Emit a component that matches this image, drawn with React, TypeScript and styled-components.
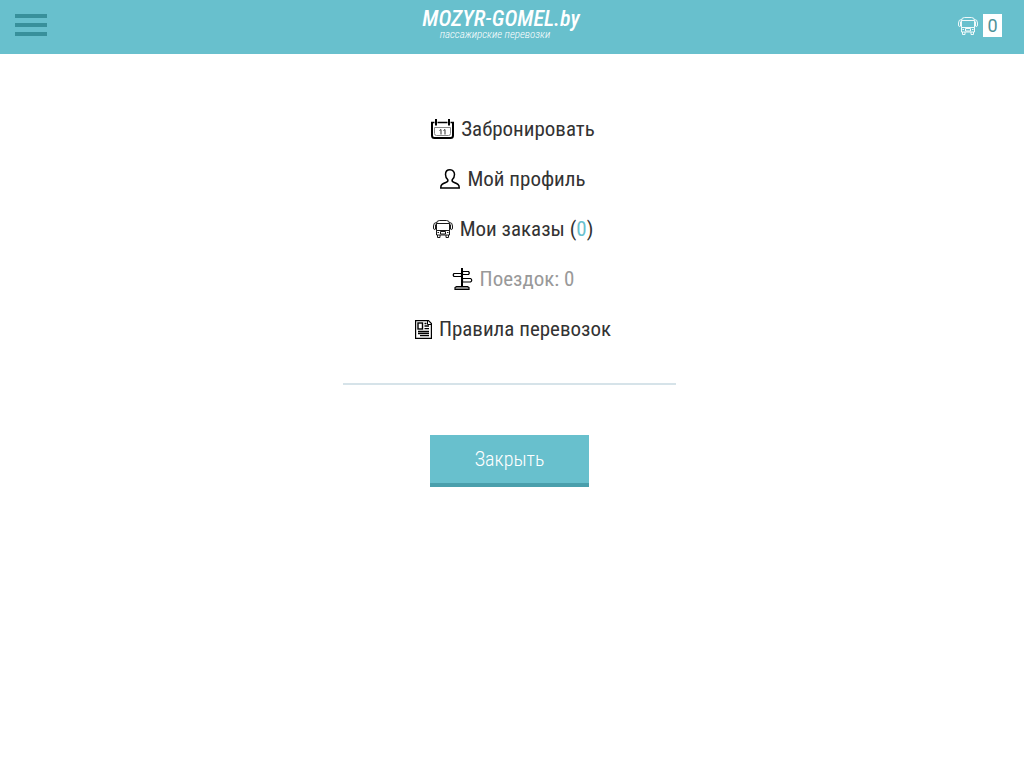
import React from "react";
import styled, { createGlobalStyle } from "styled-components";

const GlobalStyle = createGlobalStyle`
  *, *::before, *::after { box-sizing: border-box; }
  body {
    margin: 0;
    background: #fff;
    color: #333;
    font-family: "Roboto Condensed", Roboto, "Noto Sans", sans-serif;
  }
`;

const Header = styled.header`
  display: grid;
  grid-template-columns: 1fr auto 1fr;
  align-items: start;
  height: 54px;
  padding: 0 22px 0 0;
  background: #68c0cd;
`;

const MenuButton = styled.button`
  display: flex;
  flex-direction: column;
  justify-self: start;
  gap: 5px;
  margin: 14px 0 0 15px;
  padding: 0;
  border: 0;
  background: none;
  cursor: pointer;
`;

const MenuBar = styled.span`
  width: 32px;
  height: 4px;
  background: #38909b;
`;

const Logo = styled.a`
  display: flex;
  flex-direction: column;
  align-items: center;
  padding-top: 9px;
  color: #fff;
  font-style: italic;
  text-decoration: none;
  white-space: nowrap;
`;

const LogoName = styled.span`
  font-size: 22px;
  font-weight: 500;
  line-height: 20px;
`;

const LogoTagline = styled.span`
  padding-right: 12px;
  font-size: 11px;
  font-weight: 300;
  line-height: 12px;
`;

const OrdersLink = styled.a`
  display: flex;
  align-items: center;
  justify-self: end;
  gap: 5px;
  margin-top: 14px;
  color: #fff;
  text-decoration: none;
`;

const OrdersBadge = styled.span`
  width: 19px;
  background: #fff;
  color: #4f9299;
  font-family: Roboto, sans-serif;
  font-size: 18px;
  line-height: 23px;
  text-align: center;
`;

const Content = styled.main`
  display: flex;
  flex-direction: column;
  align-items: center;
  padding: 50px 5px 50px 0;
`;

const MenuList = styled.ul`
  display: flex;
  flex-direction: column;
  align-items: center;
  margin: 0;
  padding: 0 0 0 7px;
  list-style: none;
`;

const MenuItem = styled.li`
  display: flex;
  align-items: center;
  height: 50px;
  font-size: 21px;
  line-height: 24px;
`;

const MenuLink = styled.a`
  display: flex;
  align-items: center;
  gap: 7px;
  color: #333;
  text-decoration: none;
`;

const MenuNote = styled.span`
  display: flex;
  align-items: center;
  gap: 7px;
  color: #999;
`;

const Count = styled.span`
  color: #68c0cd;
`;

const Glyph = styled.svg`
  display: block;
  flex: none;
  color: #000;
`;

const LightGlyph = styled(Glyph)`
  color: #fff;
`;

const Divider = styled.hr`
  width: 333px;
  max-width: 90%;
  height: 2px;
  margin: 29px 0 50px;
  border: 0;
  background: #d6e3e9;
`;

const CloseButton = styled.button`
  width: 159px;
  height: 52px;
  padding: 0 0 1px;
  border: 0;
  border-bottom: 4px solid #4a9fac;
  background: #68c0cd;
  color: #fff;
  font-family: inherit;
  font-size: 20px;
  font-weight: 300;
  cursor: pointer;
`;

const busShapes = (
  <g fill="none" stroke="currentColor" strokeWidth=".9">
    <path d="M3.500 3.500Q3.500 .5 6.500 .5h7q3 0 3 3v7h-13z" />
    <path d="M3.500 3.500h13" />
    <path d="M3.500 2.500Q.5 2.500 .5 6v2q0 1.500 1.200 1.500T2.500 8V4.500M16.500 2.500q3 0 3 3.500v2q0 1.500-1.200 1.500T17.500 8V4.500" />
    <path d="M3.500 10.500v4.500h13v-4.500M7.500 11.500h5v2.500h-5zM4.500 12.500h1.500M14 12.500h1.500" />
    <path d="M4.500 15v2.500h2.500v-2.500M13 15v2.500h2.500v-2.500" />
  </g>
);

const CalendarIcon = () => (
  <Glyph width="23" height="21" viewBox="0 0 23 21" aria-hidden="true">
    <path d="M1 3v13.500q0 2.500 2.500 2.500h16q2.500 0 2.500-2.500V3" fill="none" stroke="currentColor" strokeWidth="2" />
    <path d="M0 3.500h3.500M6.500 3.500h10M19.500 3.500h3.500" stroke="currentColor" strokeWidth="1.500" />
    <path d="M5 0v6.500M18 0v6.500" stroke="currentColor" strokeWidth="2" />
    <path d="M3.500 8.500h16v6q0 2-2 2h-12q-2 0-2-2z" fill="none" stroke="#888" />
    <path d="M8.500 11.500l1.500-1V15.500M12.500 11.500l1.500-1V15.500" fill="none" stroke="#333" />
  </Glyph>
);

const ProfileIcon = () => (
  <Glyph width="20" height="20" viewBox="0 0 20 20" aria-hidden="true">
    <path
      d="M10 .8c-3 0-4.500 2-4.500 4.700 0 2.500 1 4 2.300 5.200.5 1.500-.3 2.200-2 2.800C2.500 14.800.8 15.500.8 18.500v.5h18.400v-.5c0-3-1.700-3.700-5-5-1.700-.6-2.500-1.300-2-2.800 1.300-1.200 2.300-2.700 2.300-5.200C14.500 2.800 13 .8 10 .8z"
      fill="none"
      stroke="currentColor"
      strokeWidth="1.500"
    />
  </Glyph>
);

const BusIcon = () => (
  <Glyph width="20" height="18" viewBox="0 0 20 18" aria-hidden="true">
    {busShapes}
  </Glyph>
);

const SignpostIcon = () => (
  <Glyph width="21" height="22" viewBox="0 0 21 22" aria-hidden="true">
    <path d="M10 0v18" stroke="currentColor" strokeWidth="2" />
    <g fill="#fff" stroke="currentColor" strokeWidth="1.200">
      <path d="M9.500 5.500h-7.500q-1.500 1.500 0 3h7.500zM10.500 3.500h6q1.500 1.500 0 3h-6zM10.500 10.500h8q2.500 1.500 0 3.500h-8z" />
    </g>
    <path d="M4.500 18.500h11l1.500 1v2H3v-2z" fill="#888" stroke="currentColor" strokeWidth="1.200" />
  </Glyph>
);

const RulesIcon = () => (
  <Glyph width="17" height="19" viewBox="0 0 17 19" aria-hidden="true">
    <g fill="none" stroke="currentColor">
      <path d="M.6.6h12.900l2.900 3v14.800H.6z" strokeWidth="1.200" />
      <path d="M12.500 1v3.500H16" />
      <rect x="3" y="3" width="4.500" height="6" strokeWidth="1.400" />
      <path d="M9.500 3.500h2M9.500 6h4.500M9.500 8.700h4.500M3 11.500h11M3 13.500h11M5 15.700h9" strokeWidth="1.300" />
    </g>
  </Glyph>
);

export default function App() {
  return (
    <>
      <GlobalStyle />
      <Header>
        <MenuButton type="button" aria-label="Меню">
          <MenuBar />
          <MenuBar />
          <MenuBar />
        </MenuButton>
        <Logo href="#">
          <LogoName>MOZYR-GOMEL.by</LogoName>
          <LogoTagline>пассажирские перевозки</LogoTagline>
        </Logo>
        <OrdersLink href="#orders" aria-label="Мои заказы: 0">
          <LightGlyph width="20" height="18" viewBox="0 0 20 18" aria-hidden="true">
            {busShapes}
          </LightGlyph>
          <OrdersBadge>0</OrdersBadge>
        </OrdersLink>
      </Header>
      <Content>
        <MenuList>
          <MenuItem>
            <MenuLink href="#booking">
              <CalendarIcon />
              Забронировать
            </MenuLink>
          </MenuItem>
          <MenuItem>
            <MenuLink href="#profile">
              <ProfileIcon />
              Мой профиль
            </MenuLink>
          </MenuItem>
          <MenuItem>
            <MenuLink href="#orders">
              <BusIcon />
              <span>
                Мои заказы (<Count>0</Count>)
              </span>
            </MenuLink>
          </MenuItem>
          <MenuItem>
            <MenuNote>
              <SignpostIcon />
              Поездок: 0
            </MenuNote>
          </MenuItem>
          <MenuItem>
            <MenuLink href="#rules">
              <RulesIcon />
              Правила перевозок
            </MenuLink>
          </MenuItem>
        </MenuList>
        <Divider />
        <CloseButton type="button">Закрыть</CloseButton>
      </Content>
    </>
  );
}
